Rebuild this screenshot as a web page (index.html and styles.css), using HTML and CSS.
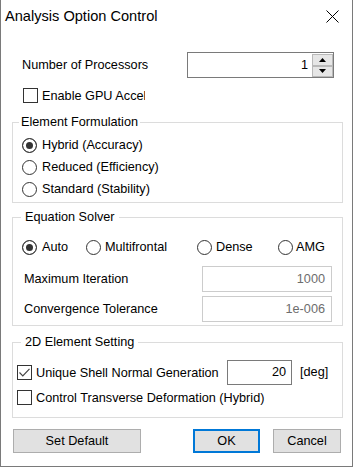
FILE: index.html
```html
<!DOCTYPE html>
<html>
<head>
<meta charset="utf-8">
<title>Analysis Option Control</title>
<link rel="stylesheet" href="styles.css">
</head>
<body>
<div class="window">
  <div class="titlebar">
    <span class="title">Analysis Option Control</span>
    <svg class="close" width="13" height="13" viewBox="0 0 13 13"><path d="M0.5 0.5 L12.5 12.5 M12.5 0.5 L0.5 12.5" stroke="#000" stroke-width="1" fill="none"/></svg>
  </div>
  <div class="content">
    <div class="proc-row">
      <span class="proc-label">Number of Processors</span>
      <div class="spin">
        <span class="spin-value">1</span>
        <div class="spin-btns">
          <span class="spin-btn"><svg width="7" height="4" viewBox="0 0 7 4"><path d="M3.5 0 L7 4 L0 4 Z" fill="#000"/></svg></span>
          <span class="spin-btn"><svg width="7" height="4" viewBox="0 0 7 4"><path d="M0 0 L7 0 L3.5 4 Z" fill="#000"/></svg></span>
        </div>
      </div>
    </div>

    <div class="check gpu">
      <span class="box"></span>
      <span class="check-text clip">Enable GPU Acceleration</span>
    </div>

    <fieldset class="group g1">
      <legend class="legend-a">Element Formulation</legend>
      <div class="radio-list">
        <div class="radio"><span class="circle on"></span><span class="radio-text">Hybrid (Accuracy)</span></div>
        <div class="radio"><span class="circle"></span><span class="radio-text">Reduced (Efficiency)</span></div>
        <div class="radio"><span class="circle"></span><span class="radio-text">Standard (Stability)</span></div>
      </div>
    </fieldset>

    <fieldset class="group g2">
      <legend class="legend-b">Equation Solver</legend>
      <div class="solver-body">
        <div class="radio-row">
          <div class="radio r-auto"><span class="circle on"></span><span class="radio-text">Auto</span></div>
          <div class="radio r-multi"><span class="circle"></span><span class="radio-text">Multifrontal</span></div>
          <div class="radio r-dense"><span class="circle"></span><span class="radio-text">Dense</span></div>
          <div class="radio r-amg"><span class="circle"></span><span class="radio-text">AMG</span></div>
        </div>
        <div class="field-row first">
          <span class="field-label">Maximum Iteration</span>
          <span class="field-box disabled">1000</span>
        </div>
        <div class="field-row">
          <span class="field-label">Convergence Tolerance</span>
          <span class="field-box disabled">1e-006</span>
        </div>
      </div>
    </fieldset>

    <fieldset class="group g3">
      <legend class="legend-b">2D Element Setting</legend>
      <div class="shell-body">
        <div class="shell-row">
          <div class="check shell-check">
            <span class="box checked"><svg width="13" height="13" viewBox="0 0 13 13"><path d="M1.5 6.5 L4.8 9.8 L11.5 2.8" stroke="#444" stroke-width="1.2" fill="none"/></svg></span>
            <span class="check-text">Unique Shell Normal Generation</span>
          </div>
          <span class="deg-box">20</span>
          <span class="deg-unit">[deg]</span>
        </div>
        <div class="check second">
          <span class="box"></span>
          <span class="check-text">Control Transverse Deformation (Hybrid)</span>
        </div>
      </div>
    </fieldset>

    <div class="buttons">
      <span class="btn btn-default">Set Default</span>
      <span class="btn btn-ok">OK</span>
      <span class="btn btn-cancel">Cancel</span>
    </div>
  </div>
</div>
</body>
</html>
```

FILE: styles.css
```css
html, body {
  margin: 0;
  padding: 0;
  background: #fff;
}

body {
  font-family: "Liberation Sans", Arial, sans-serif;
  font-size: 12.7px;
  color: #000;
}

.window {
  width: 353px;
  height: 467px;
  box-sizing: border-box;
  border: 1px solid #7a7a7a;
  border-top: none;
  background: #fff;
  overflow: hidden;
}

.titlebar {
  height: 31px;
  display: flex;
  align-items: flex-start;
}

.title {
  font-size: 14.6px;
  line-height: 17px;
  margin-top: 8px;
  margin-left: 4px;
  color: #000;
}

.close {
  margin-left: auto;
  margin-right: 13px;
  margin-top: 10px;
  display: block;
}

.content {
  padding-left: 11px;
}

/* Number of processors */
.proc-row {
  margin-top: 21px;
  height: 26px;
  display: flex;
  align-items: center;
  padding-left: 10px;
}

.proc-label {
  width: 165px;
  white-space: nowrap;
}

.spin {
  width: 147px;
  height: 26px;
  box-sizing: border-box;
  border: 1px solid #7a7a7a;
  display: flex;
}

.spin-value {
  flex: 1;
  text-align: right;
  line-height: 24px;
  padding-right: 4px;
}

.spin-btns {
  width: 21px;
  display: flex;
  flex-direction: column;
  padding: 1px 0 0 0;
  box-sizing: border-box;
}

.spin-btn {
  flex: 1;
  box-sizing: border-box;
  border: 1px solid #b9b9b9;
  background: #e6e6e6;
  display: flex;
  align-items: center;
  justify-content: center;
}

.spin-btn svg {
  display: block;
}

/* checkboxes */
.check {
  display: flex;
  align-items: center;
  height: 15px;
}

.box {
  width: 15px;
  height: 15px;
  box-sizing: border-box;
  border: 1px solid #333;
  background: #fff;
  flex: none;
  display: flex;
  align-items: center;
  justify-content: center;
}

.box svg {
  display: block;
}

.check-text {
  margin-left: 4px;
  white-space: nowrap;
}

.gpu {
  margin-top: 10px;
  padding-left: 11px;
}

.clip {
  width: 103px;
  overflow: hidden;
}

/* group boxes */
.group {
  width: 331px;
  box-sizing: border-box;
  margin: 0;
  padding: 0;
  border: 1px solid #dcdcdc;
  min-inline-size: 0;
}

.group legend {
  line-height: 17px;
  font-size: 12.7px;
}

.legend-a {
  margin-left: 6px;
  padding: 0 2px;
}

.legend-b {
  margin-left: 8px;
  padding: 0 4px;
}

.g1 {
  margin-top: 11px;
}

.radio-list {
  padding: 3px 0 2px 9px;
}

.radio {
  display: flex;
  align-items: center;
  height: 22px;
  white-space: nowrap;
}

.circle {
  width: 15px;
  height: 15px;
  box-sizing: border-box;
  border: 1px solid #333;
  border-radius: 50%;
  background: #fff;
  flex: none;
}

.circle.on {
  background: #333;
  box-shadow: inset 0 0 0 3px #fff;
}

.radio-text {
  margin-left: 5px;
}

/* solver group */
.g2 {
  margin-top: 6px;
}

.solver-body {
  padding: 10px 0 3px 9px;
}

.radio-row {
  display: flex;
}

.r-auto { width: 64px; }
.r-multi { width: 111px; }
.r-dense { width: 81px; }
.r-multi .radio-text,
.r-dense .radio-text { margin-left: 4px; }
.r-amg .radio-text { margin-left: 3px; }

.field-row {
  display: flex;
  align-items: center;
  height: 26px;
  margin-top: 4px;
}

.field-row.first {
  margin-top: 8px;
}

.field-label {
  width: 178px;
  padding-left: 2px;
  white-space: nowrap;
}

.field-box {
  width: 130px;
  height: 26px;
  box-sizing: border-box;
  border: 1px solid #cccccc;
  text-align: right;
  line-height: 24px;
  padding-right: 6px;
}

.field-box.disabled {
  color: #6d6d6d;
}

/* 2D element group */
.g3 {
  margin-top: 8px;
}

.shell-body {
  padding: 9px 0 12px 4px;
}

.shell-row {
  display: flex;
  align-items: center;
  height: 25px;
}

.shell-check {
  width: 210px;
}

.deg-box {
  width: 65px;
  height: 25px;
  box-sizing: border-box;
  border: 1px solid #7a7a7a;
  text-align: right;
  line-height: 23px;
  padding-right: 5px;
}

.deg-unit {
  margin-left: 8px;
  margin-top: -2px;
}

.check.second {
  margin-top: 5px;
}

/* buttons */
.buttons {
  display: flex;
  margin-top: 11px;
  padding-left: 1px;
}

.btn {
  height: 24px;
  box-sizing: border-box;
  border: 1px solid #adadad;
  background: #e1e1e1;
  display: flex;
  align-items: center;
  justify-content: center;
}

.btn-default {
  width: 128px;
}

.btn-ok {
  width: 67px;
  margin-left: 52px;
  border: 2px solid #0078d7;
}

.btn-cancel {
  width: 68px;
  margin-left: 13px;
}
```
